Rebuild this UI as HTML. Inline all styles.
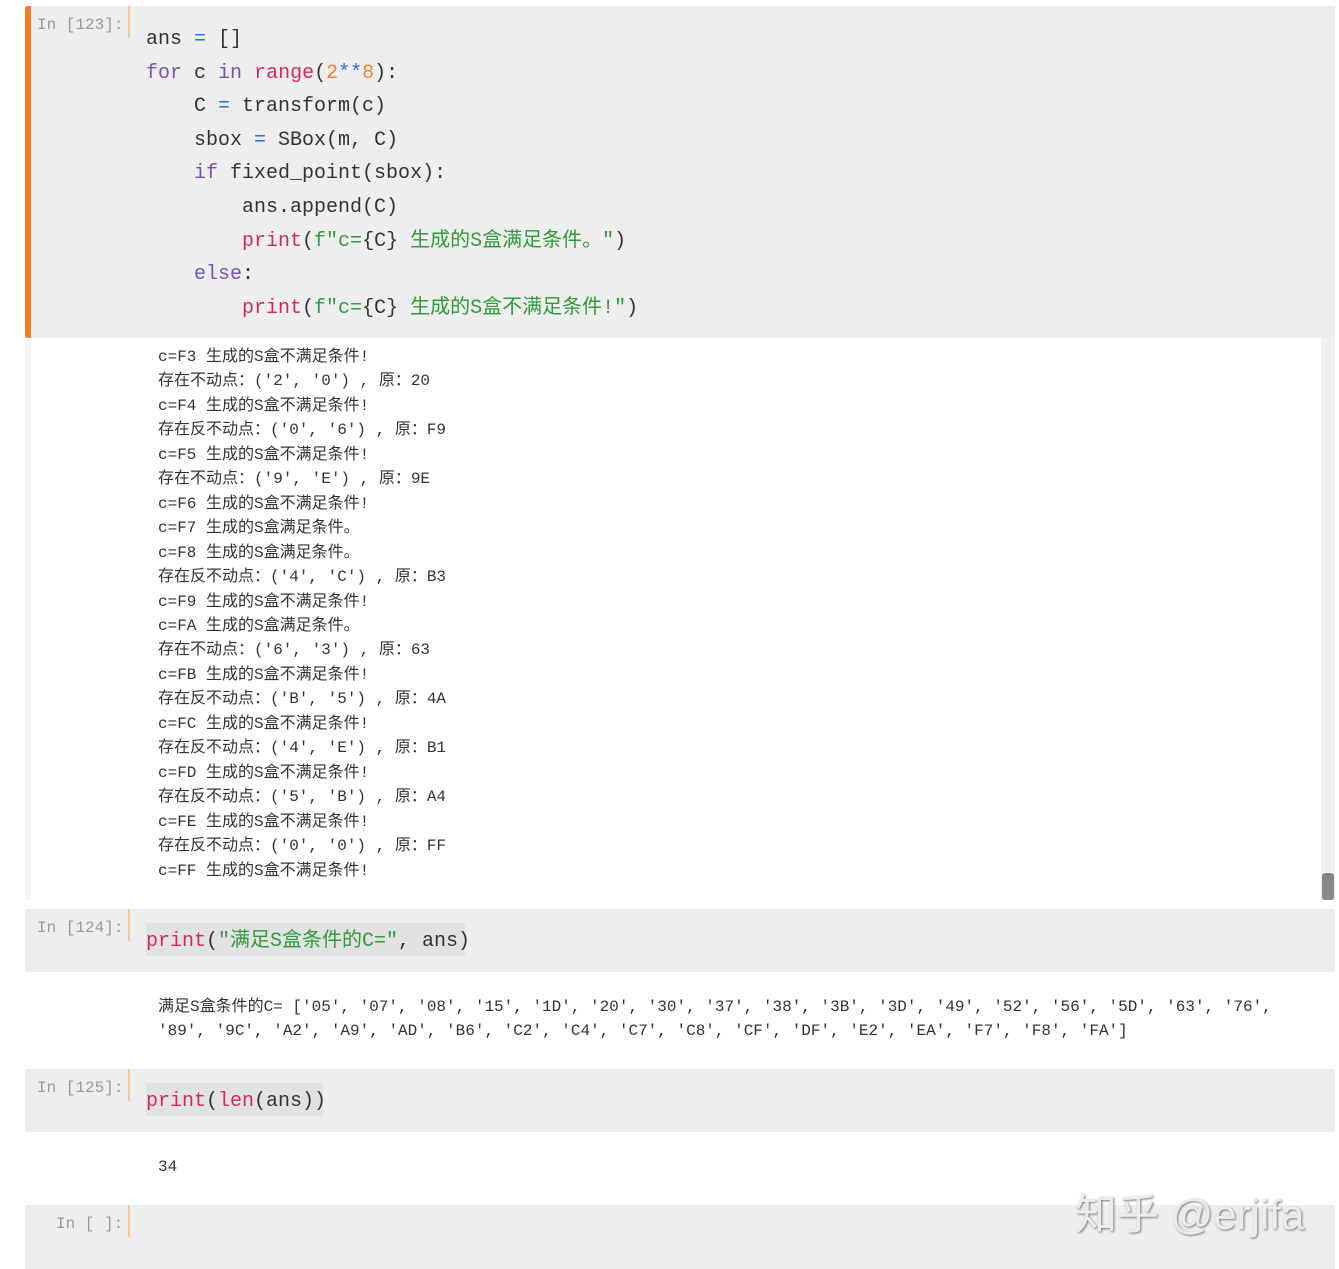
<!DOCTYPE html>
<html><head><meta charset="utf-8"><style>
*{margin:0;padding:0;box-sizing:border-box}
body{width:1339px;height:1269px;background:#fff;position:relative;overflow:hidden;font-family:"Liberation Mono","Noto Sans CJK SC",monospace}
.abs{position:absolute}
.cell{position:absolute;left:25px;width:1310px;background:#eeeeee}
.prompt{position:absolute;font-size:16px;color:#999;white-space:pre;font-family:"Liberation Mono",monospace}
.pbar{position:absolute;left:128px;width:2px;background:#f4c79a}
.code{position:absolute;left:146px;font-size:20px;line-height:33.6px;color:#333;white-space:pre}
.k{color:#7b4fb3}.f{color:#d02a66}.n{color:#f0803a}.o{color:#2a6fe0}.s{color:#2e9a3a}
.out{position:absolute;left:158px;font-size:16px;line-height:24.45px;color:#333;white-space:pre}
</style></head><body>
<div class="cell" style="top:6px;height:332px"></div>
<div class="abs" style="left:25px;top:6px;width:6px;height:332px;background:#f37b2a;border-radius:3px 0 0 3px"></div>
<div class="prompt" style="left:37px;top:16px">In [123]:</div>
<div class="pbar" style="top:6px;height:32px"></div>
<div class="code" style="top:23px">ans <span class="o">=</span> []
<span class="k">for</span> c <span class="k">in</span> <span class="f">range</span>(<span class="n">2</span><span class="o">**</span><span class="n">8</span>):
    C <span class="o">=</span> transform(c)
    sbox <span class="o">=</span> SBox(m, C)
    <span class="k">if</span> fixed_point(sbox):
        ans.append(C)
        <span class="f">print</span>(<span class="s">f"c=</span>{C}<span class="s"> 生成的S盒满足条件。"</span>)
    <span class="k">else</span>:
        <span class="f">print</span>(<span class="s">f"c=</span>{C}<span class="s"> 生成的S盒不满足条件!"</span>)</div>

<div class="abs" style="left:25px;top:338px;width:6px;height:562px;background:#f4f4f4"></div>
<div class="abs" style="left:1321px;top:338px;width:14px;height:562px;background:#f1f1f1"></div>
<div class="abs" style="left:1322px;top:873px;width:12px;height:27px;background:#888;border-radius:3px"></div>
<div class="out" style="top:345px">c=F3 生成的S盒不满足条件!
存在不动点：('2', '0') , 原：20
c=F4 生成的S盒不满足条件!
存在反不动点：('0', '6') , 原：F9
c=F5 生成的S盒不满足条件!
存在不动点：('9', 'E') , 原：9E
c=F6 生成的S盒不满足条件!
c=F7 生成的S盒满足条件。
c=F8 生成的S盒满足条件。
存在反不动点：('4', 'C') , 原：B3
c=F9 生成的S盒不满足条件!
c=FA 生成的S盒满足条件。
存在不动点：('6', '3') , 原：63
c=FB 生成的S盒不满足条件!
存在反不动点：('B', '5') , 原：4A
c=FC 生成的S盒不满足条件!
存在反不动点：('4', 'E') , 原：B1
c=FD 生成的S盒不满足条件!
存在反不动点：('5', 'B') , 原：A4
c=FE 生成的S盒不满足条件!
存在反不动点：('0', '0') , 原：FF
c=FF 生成的S盒不满足条件!</div>

<div class="cell" style="top:909px;height:63px"></div>
<div class="prompt" style="left:37px;top:919px">In [124]:</div>
<div class="pbar" style="top:909px;height:32px"></div>
<div class="abs" style="left:146px;top:923px;width:319px;height:33px;background:#e2e2e2"></div>
<div class="code" style="top:925px"><span class="f">print</span>(<span class="s">"满足S盒条件的C="</span>, ans)</div>
<div class="out" style="top:995px;line-height:24px">满足S盒条件的C= ['05', '07', '08', '15', '1D', '20', '30', '37', '38', '3B', '3D', '49', '52', '56', '5D', '63', '76',
'89', '9C', 'A2', 'A9', 'AD', 'B6', 'C2', 'C4', 'C7', 'C8', 'CF', 'DF', 'E2', 'EA', 'F7', 'F8', 'FA']</div>

<div class="cell" style="top:1069px;height:63px"></div>
<div class="prompt" style="left:37px;top:1079px">In [125]:</div>
<div class="pbar" style="top:1069px;height:32px"></div>
<div class="abs" style="left:146px;top:1083px;width:177px;height:33px;background:#e2e2e2"></div>
<div class="code" style="top:1085px"><span class="f">print</span>(<span class="f">len</span>(ans))</div>
<div class="out" style="top:1155px">34</div>

<div class="cell" style="top:1205px;height:64px"></div>
<div class="prompt" style="left:56px;top:1215px">In [ ]:</div>
<div class="pbar" style="top:1205px;height:32px"></div>

<div class="abs" style="left:1075px;top:1181px;font-family:'Liberation Sans','Noto Sans CJK SC',sans-serif;font-size:42px;color:#ececec;text-shadow:1px 1px 2px #777;white-space:pre">知乎 @erjifa</div>
</body></html>
